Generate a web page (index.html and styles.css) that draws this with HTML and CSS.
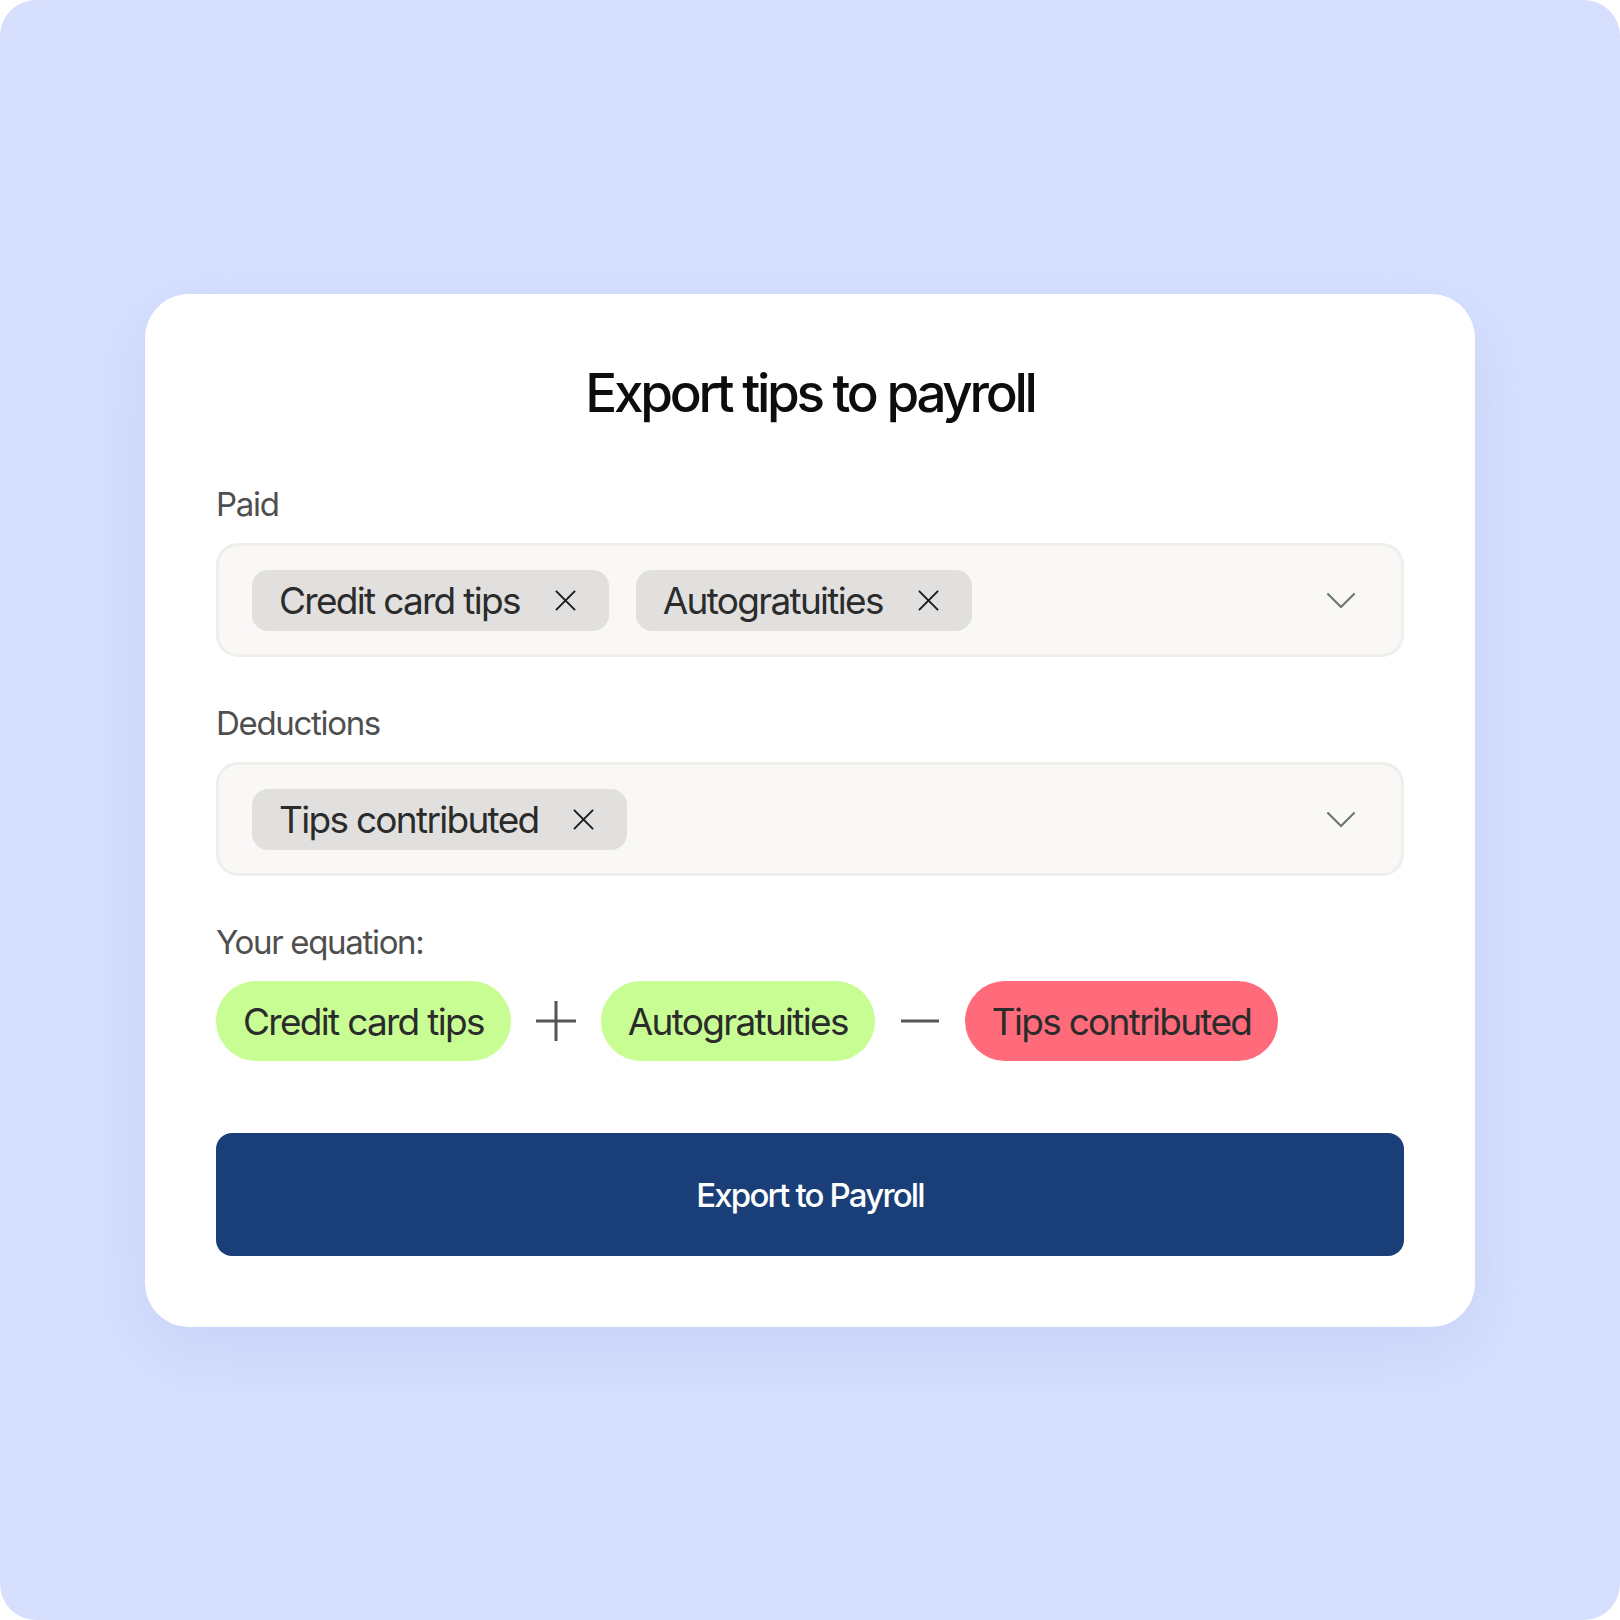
FILE: index.html
```html
<!DOCTYPE html>
<html lang="en">
<head>
  <meta charset="UTF-8">
  <title>Export tips to payroll</title>
  <link rel="stylesheet" href="styles.css">
</head>
<body>
  <div class="frame">
    <div class="card">
      <h1 class="title">Export tips to payroll</h1>

      <!-- Paid -->
      <div class="group">
        <div class="field-label">Paid</div>
        <div class="field">
          <div class="chips">
            <span class="chip">Credit card tips
              <svg class="chip-x" viewBox="0 0 24 24"><path d="M2 2 L22 22 M22 2 L2 22"/></svg>
            </span>
            <span class="chip">Autogratuities
              <svg class="chip-x" viewBox="0 0 24 24"><path d="M2 2 L22 22 M22 2 L2 22"/></svg>
            </span>
          </div>
          <svg class="chevron" viewBox="0 0 32 18"><path d="M1.5 1.5 L16 16 L30.5 1.5"/></svg>
        </div>
      </div>

      <!-- Deductions -->
      <div class="group">
        <div class="field-label">Deductions</div>
        <div class="field">
          <div class="chips">
            <span class="chip">Tips contributed
              <svg class="chip-x" viewBox="0 0 24 24"><path d="M2 2 L22 22 M22 2 L2 22"/></svg>
            </span>
          </div>
          <svg class="chevron" viewBox="0 0 32 18"><path d="M1.5 1.5 L16 16 L30.5 1.5"/></svg>
        </div>
      </div>

      <!-- Equation -->
      <div class="group">
        <div class="field-label">Your equation:</div>
        <div class="equation">
          <span class="pill pill-add">Credit card tips</span>
          <svg class="op" viewBox="0 0 40 40"><path d="M0 20 H40 M20 0 V40"/></svg>
          <span class="pill pill-add">Autogratuities</span>
          <svg class="op" viewBox="0 0 40 40"><path d="M1 20 H39"/></svg>
          <span class="pill pill-sub">Tips contributed</span>
        </div>
      </div>

      <button class="export-btn">Export to Payroll</button>
    </div>
  </div>
</body>
</html>
```

FILE: styles.css
```css
body {
  margin: 0;
  background: #ffffff;
  font-family: 'Inter', 'Noto Sans', sans-serif;
}
.frame {
  width: 1620px;
  height: 1620px;
  box-sizing: border-box;
  padding-top: 294px;
  background: #d6e0fe;
  border-radius: 36px;
  display: flex;
  justify-content: center;
  align-items: flex-start;
}
.card {
  width: 1330px;
  box-sizing: border-box;
  padding: 66px 71px 71px;
  background: #fff;
  border-radius: 44px;
  box-shadow: 0 24px 70px rgba(70, 100, 190, 0.11);
}
.title {
  margin: 0 0 58px;
  font-size: 53px;
  line-height: 66px;
  font-weight: 500;
  letter-spacing: -0.062em;
  text-align: center;
  color: #0d0d0d;
}
.group {
  margin-bottom: 46px;
}
.group:last-of-type {
  margin-bottom: 72px;
}
.field-label {
  font-size: 33px;
  line-height: 40px;
  letter-spacing: -0.04em;
  color: #4f4f4f;
  margin-bottom: 19px;
}
.field-label + .equation {
  margin-top: 1px;
}
.field {
  height: 114px;
  box-sizing: border-box;
  border: 3px solid #efeeeb;
  border-radius: 22px;
  background: #f9f8f6;
  padding: 0 45px 0 33px;
  display: flex;
  align-items: center;
  justify-content: space-between;
}
.chips {
  display: flex;
  gap: 27px;
}
.chip {
  height: 61px;
  box-sizing: border-box;
  padding: 0 32px 0 27px;
  border-radius: 16px;
  background: #e1e0df;
  display: flex;
  align-items: center;
  gap: 34px;
  font-size: 37px;
  letter-spacing: -0.046em;
  color: #2b2b2b;
}
.chip-x {
  width: 23px;
  height: 23px;
  fill: none;
  stroke: #1a1a1a;
  stroke-width: 2;
}
.chevron {
  width: 30px;
  height: 17px;
  fill: none;
  stroke: #6a776a;
  stroke-width: 2.2;
}
.equation {
  display: flex;
  align-items: center;
  gap: 25px;
}
.pill {
  height: 80px;
  box-sizing: border-box;
  padding: 0 27px;
  border-radius: 40px;
  display: flex;
  align-items: center;
  font-size: 37px;
  letter-spacing: -0.046em;
  color: #2b2b2b;
}
.pill-add {
  background: #c7fd93;
}
.pill-sub {
  background: #ff6b7b;
}
.op {
  width: 40px;
  height: 40px;
  fill: none;
  stroke: #555;
  stroke-width: 3;
}
.export-btn {
  display: block;
  width: 100%;
  height: 123px;
  border: none;
  border-radius: 16px;
  background: #1a3f78;
  color: #fff;
  font-family: 'Inter', 'Noto Sans', sans-serif;
  font-size: 33px;
  font-weight: 500;
  letter-spacing: -0.055em;
  cursor: pointer;
}
```
